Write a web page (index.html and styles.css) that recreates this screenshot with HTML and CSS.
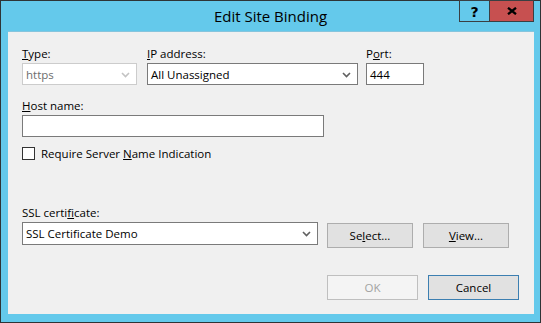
FILE: index.html
```html
<!DOCTYPE html>
<html>
<head>
<meta charset="utf-8">
<link rel="stylesheet" href="styles.css">
</head>
<body>
<div class="window">
  <div class="titlebar">
    <div class="title">Edit Site Binding</div>
    <div class="caption-buttons">
      <div class="cbtn help">?</div>
      <div class="cbtn close">
        <svg width="10" height="8" viewBox="0 0 10 8"><path d="M1 0.8 L9 7.2 M9 0.8 L1 7.2" stroke="#000" stroke-width="2.3" fill="none"/></svg>
      </div>
    </div>
  </div>
  <div class="client">
    <div class="row row-top">
      <div class="field f-type">
        <div class="label"><u>T</u>ype:</div>
        <div class="select disabled"><span>https</span>
          <svg class="arrow" width="9" height="6" viewBox="0 0 9 6"><path d="M1 1 L4.5 4.5 L8 1" stroke="#c3c3c3" stroke-width="1.6" fill="none"/></svg>
        </div>
      </div>
      <div class="field f-ip">
        <div class="label"><u>I</u>P address:</div>
        <div class="select"><span>All Unassigned</span>
          <svg class="arrow" width="9" height="6" viewBox="0 0 9 6"><path d="M1 1 L4.5 4.5 L8 1" stroke="#606060" stroke-width="1.6" fill="none"/></svg>
        </div>
      </div>
      <div class="field f-port">
        <div class="label">P<u>o</u>rt:</div>
        <div class="input"><span>444</span></div>
      </div>
    </div>
    <div class="field f-host">
      <div class="label"><u>H</u>ost name:</div>
      <div class="input"></div>
    </div>
    <div class="check-row">
      <div class="checkbox"></div>
      <div class="check-label">Require Server <u>N</u>ame Indication</div>
    </div>
    <div class="field f-ssl">
      <div class="label">SSL certi<u>f</u>icate:</div>
      <div class="ssl-row">
        <div class="select ssl-select"><span>SSL Certificate Demo</span>
          <svg class="arrow" width="9" height="6" viewBox="0 0 9 6"><path d="M1 1 L4.5 4.5 L8 1" stroke="#606060" stroke-width="1.6" fill="none"/></svg>
        </div>
        <div class="button btn-select">Se<u>l</u>ect...</div>
        <div class="button btn-view"><u>V</u>iew...</div>
      </div>
    </div>
    <div class="footer">
      <div class="button btn-ok disabled">OK</div>
      <div class="button btn-cancel default">Cancel</div>
    </div>
  </div>
</div>
</body>
</html>
```

FILE: styles.css
```css
html, body {
  margin: 0;
  padding: 0;
}
body {
  width: 541px;
  height: 323px;
  font-family: "Open Sans", "Noto Sans", sans-serif;
  font-size: 11.5px;
  color: #000;
  overflow: hidden;
}
.window {
  box-sizing: border-box;
  width: 541px;
  height: 323px;
  border: 1px solid #2e3436;
  background: #64c9eb;
  padding: 0 6px 8px 7px;
  display: flex;
  flex-direction: column;
}
.titlebar {
  height: 30px;
  display: grid;
  margin: 0 -6px 0 -7px;
}
.title, .caption-buttons {
  grid-area: 1 / 1;
}
.title {
  justify-self: center;
  font-size: 15px;
  line-height: 28px;
  color: #000;
  padding-top: 1px;
}
.caption-buttons {
  justify-self: end;
  align-self: start;
  display: flex;
  margin-right: 6px;
  margin-top: -1px;
}
.cbtn {
  box-sizing: border-box;
  height: 22px;
  display: flex;
  align-items: center;
  justify-content: center;
  border: 1px solid #3a3f42;
}
.help {
  width: 30px;
  border-right: none;
  font-weight: bold;
  font-size: 14px;
  font-family: "DejaVu Sans", sans-serif;
  padding-top: 1px;
}
.close {
  width: 45px;
  background: #c75050;
}
.client {
  flex: 1;
  background: #f0f0f0;
  border-top: 1px solid #86c5dd;
  padding: 14px 14px 0 14px;
  box-sizing: border-box;
}
.label {
  line-height: 16px;
  height: 16px;
  margin-bottom: 1px;
  color: #000;
}
.row-top {
  display: flex;
}
.f-type { width: 115px; margin-right: 10px; }
.f-ip { width: 211px; margin-right: 8px; }
.f-port { width: 58px; }
.select, .input {
  box-sizing: border-box;
  height: 22px;
  border: 1px solid #7a7a7a;
  background: #fff;
  display: flex;
  align-items: center;
  padding-left: 3px;
}
.select span, .input span {
  flex: 1;
  white-space: nowrap;
}
.select .arrow {
  margin-right: 6px;
  margin-top: 1px;
}
.select.disabled {
  border-color: #cccccc;
  color: #6d6d6d;
}
.f-host {
  margin-top: 13px;
  width: 302px;
}
.check-row {
  display: flex;
  align-items: center;
  margin-top: 9px;
}
.checkbox {
  box-sizing: border-box;
  width: 13px;
  height: 13px;
  border: 1px solid #333;
  background: #fff;
  margin-right: 6px;
}
.check-label {
  line-height: 15px;
}
.f-ssl {
  margin-top: 44px;
}
.ssl-row {
  display: flex;
  align-items: flex-start;
}
.ssl-select {
  width: 296px;
  height: 23px;
  margin-right: 9px;
}
.button {
  box-sizing: border-box;
  height: 25px;
  background: #e1e1e1;
  border: 1px solid #adadad;
  display: flex;
  align-items: center;
  justify-content: center;
}
.btn-select, .btn-view {
  width: 86px;
  margin-top: 1px;
}
.btn-select { margin-right: 10px; }
.footer {
  display: flex;
  justify-content: flex-end;
  margin-top: 27px;
  padding-right: 1px;
}
.btn-ok {
  width: 91px;
  margin-right: 10px;
}
.btn-cancel { width: 91px; }
.button.disabled {
  background: #f4f4f4;
  border-color: #bfbfbf;
  color: #a2a2a2;
}
.button.default {
  border-color: #3c7fb1;
}
u {
  text-decoration: underline;
  text-underline-offset: 1px;
}
```
